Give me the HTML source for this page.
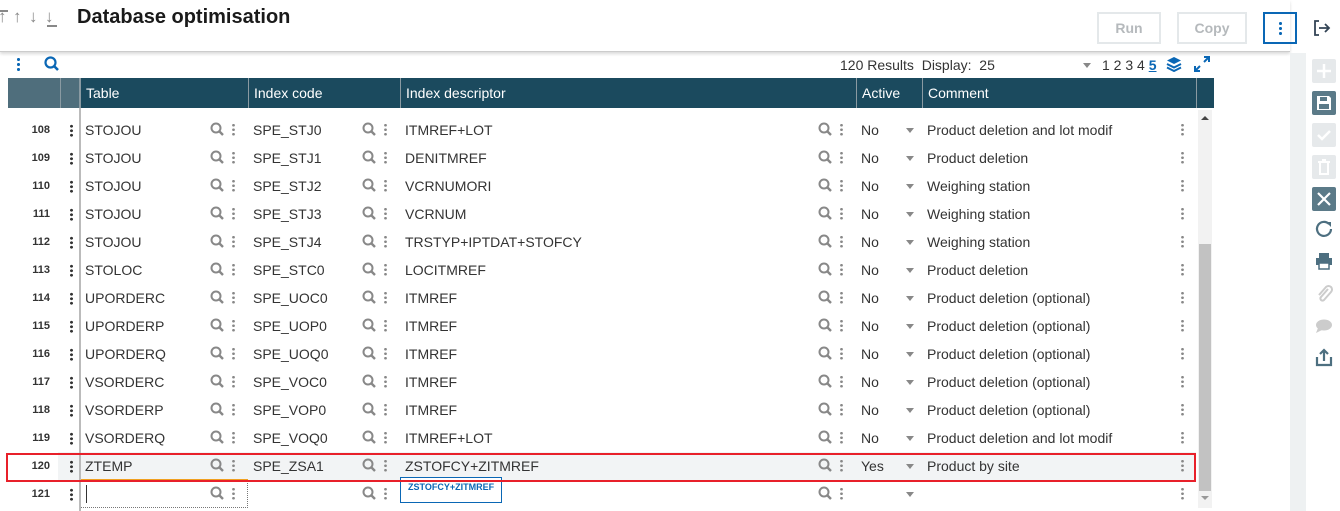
<!DOCTYPE html>
<html><head><meta charset="utf-8"><style>
*{box-sizing:border-box;margin:0;padding:0}
body{width:1340px;height:511px;overflow:hidden;background:#fff;font-family:"Liberation Sans",sans-serif;color:#333;position:relative}
svg{display:block}
.a{position:absolute}
.hdr{left:0;top:0;width:1290px;height:52px;border-bottom:1px solid #ccc;box-shadow:0 2px 3px rgba(0,0,0,.15)}
.btn{border:2px solid #e4e8ea;color:#b5b9bc;font-size:14px;font-weight:bold;text-align:center;line-height:28px;height:32px}
.th{top:78px;height:30px;background:#1b4a5e;color:#fff;font-size:14px;line-height:30px;padding-left:5px;border-left:1px solid #8a9aa2}
.row{left:8px;width:1188px;height:28px;font-size:14px;line-height:28px}
.c{position:absolute;top:0}
.num{left:0;width:50px;text-align:right;font-size:11px;font-weight:bold;color:#333}
.dots{width:3px;height:13px;top:8px;background:radial-gradient(circle,#333 1.3px,transparent 1.6px) 0 0/3px 4.5px repeat-y}
.gd{width:3px;height:13px;top:7px;background:radial-gradient(circle,#888 1.2px,transparent 1.5px) 0 0/3px 4.5px repeat-y}
.mag{width:14px;height:14px;top:6px}
.dd{width:0;height:0;border-left:4px solid transparent;border-right:4px solid transparent;border-top:5px solid #888;top:12px}
.sb{left:1312px;width:24px;height:24px;border-radius:2px}
.ar{font-size:17px;color:#888;top:7px}
</style></head><body>
<div class="a hdr"></div>
<div class="a ar" style="left:-2px">↑</div>
<div class="a" style="left:0;top:10px;width:8px;height:1.5px;background:#888"></div>
<div class="a ar" style="left:13px">↑</div>
<div class="a ar" style="left:29px">↓</div>
<div class="a ar" style="left:45px">↓</div>
<div class="a" style="left:47px;top:25px;width:10px;height:1.5px;background:#888"></div>
<div class="a" style="left:77px;top:6px;font-size:20px;font-weight:bold;color:#1a1a1a">Database optimisation</div>
<div class="a btn" style="left:1097px;top:12px;width:64px">Run</div>
<div class="a btn" style="left:1177px;top:12px;width:70px">Copy</div>
<div class="a" style="left:1263px;top:12px;width:34px;height:32px;border:2px solid #0a67b5"><div class="a" style="left:14px;top:7px;width:3px;height:14px;background:radial-gradient(circle,#0a67b5 1.4px,transparent 1.7px) 0 0/3px 5px repeat-y"></div></div>
<svg class="a" style="left:1313px;top:20px" width="18" height="16"><path d="M6 1H2v14h4M6 8h10M12 4l4 4-4 4" stroke="#345" stroke-width="1.8" fill="none"/></svg>
<div class="a" style="left:1290px;top:53px;width:16px;height:458px;background:#eef1f2"></div>
<div class="a" style="left:17px;top:57px;width:3px;height:14px;background:radial-gradient(circle,#0a67b5 1.4px,transparent 1.7px) 0 0/3px 5px repeat-y"></div>
<svg class="a" style="left:44px;top:56px" width="16" height="16"><circle cx="6.5" cy="6.5" r="5" stroke="#0a67b5" stroke-width="2.2" fill="none"/><path d="M10 10l4 4" stroke="#0a67b5" stroke-width="2.6"/></svg>
<div class="a" style="left:840px;top:57px;font-size:14px">120 Results&nbsp; Display:&nbsp; 25</div>
<div class="a dd" style="left:1083px;top:63px"></div>
<div class="a" style="left:1102px;top:57px;font-size:14px">1 2 3 4 <b style="color:#0a67b5;text-decoration:underline">5</b></div>
<svg class="a" style="left:1166px;top:56px" width="16" height="16"><path d="M8 1L15 4.5 8 8 1 4.5Z" fill="#0a67b5"/><path d="M1 8l7 3.5L15 8M1 11.5l7 3.5 7-3.5" stroke="#0a67b5" stroke-width="2" fill="none"/></svg>
<svg class="a" style="left:1194px;top:56px" width="16" height="16"><path d="M10 1h5v5M15 1l-5 5M6 15H1v-5M1 15l5-5" stroke="#0a67b5" stroke-width="2" fill="none"/></svg>
<div class="a" style="left:8px;top:78px;width:52px;height:30px;background:#4f6e7c"></div>
<div class="a" style="left:60px;top:78px;width:19px;height:30px;background:#4f6e7c;border-left:1px solid #8a9aa2"></div>
<div class="a th" style="left:79px;width:169px;border-left:2px solid #8a9aa2">Table</div>
<div class="a th" style="left:248px;width:152px">Index code</div>
<div class="a th" style="left:400px;width:456px">Index descriptor</div>
<div class="a th" style="left:856px;width:66px">Active</div>
<div class="a th" style="left:922px;width:274px">Comment</div>
<div class="a" style="left:1196px;top:78px;width:18px;height:30px;background:#1b4a5e;border-left:1px solid #8a9aa2"></div>
<div class="a" style="left:1198px;top:110px;width:14px;height:398px;background:#f2f2f2"></div>
<div class="a" style="left:1199px;top:244px;width:12px;height:247px;background:#c2c2c2"></div>
<div class="a" style="left:1201px;top:116px;border-left:4px solid transparent;border-right:4px solid transparent;border-bottom:4px solid #444"></div>
<div class="a" style="left:1201px;top:496px;border-left:4px solid transparent;border-right:4px solid transparent;border-top:4px solid #999"></div>
<div id="rows"></div>
<div class="a" style="left:79px;top:108px;width:2px;height:403px;background:#bbb"></div>
<div class="a" style="left:400px;top:477px;width:102px;height:26px;border:1px solid #0a67b5;background:#fff;color:#0a67b5;font-size:9px;font-weight:bold;line-height:18px;padding-left:7px">ZSTOFCY+ZITMREF</div>
<div class="a" style="left:6px;top:453px;width:1190px;height:29px;border:2px solid #e8202a"></div>
<div class="a sb" style="top:59px;background:#e6e9eb"><svg width="24" height="24"><path d="M12 5v14M5 12h14" stroke="#fff" stroke-width="2.5"/></svg></div>
<div class="a sb" style="top:91px;background:#5b7a88"><svg width="24" height="24"><path d="M5 5h12l2 2v12H5z" fill="#fff"/><rect x="8" y="6" width="7" height="4" fill="#5b7a88"/><rect x="7" y="13" width="10" height="5" fill="#5b7a88"/></svg></div>
<div class="a sb" style="top:123px;background:#e6e9eb"><svg width="24" height="24"><path d="M6 12l4 4 8-8" stroke="#fff" stroke-width="2.5" fill="none"/></svg></div>
<div class="a sb" style="top:155px;background:#e6e9eb"><svg width="24" height="24"><path d="M6 7h12M8 8v11h8V8M10 5h4" stroke="#fff" stroke-width="2" fill="none"/></svg></div>
<div class="a sb" style="top:187px;background:#5b7a88"><svg width="24" height="24"><path d="M6 6l12 12M18 6L6 18" stroke="#fff" stroke-width="2.2"/></svg></div>
<svg class="a" style="left:1314px;top:219px" width="20" height="20"><path d="M15 5a7 7 0 1 0 2 5" stroke="#4d6f80" stroke-width="2.2" fill="none"/><path d="M12 3h5v5z" fill="#4d6f80"/></svg>
<svg class="a" style="left:1314px;top:251px" width="20" height="20"><rect x="5" y="2" width="10" height="5" fill="#4d6f80"/><rect x="2" y="7" width="16" height="7" fill="#4d6f80"/><rect x="5" y="12" width="10" height="6" fill="#fff" stroke="#4d6f80" stroke-width="1.5"/></svg>
<svg class="a" style="left:1314px;top:284px" width="20" height="20"><path d="M14 5l-7 8a2 2 0 0 0 3 3l7-8a3.5 3.5 0 0 0-5-5l-7 8" stroke="#ccc" stroke-width="2" fill="none"/></svg>
<svg class="a" style="left:1314px;top:316px" width="20" height="20"><ellipse cx="10" cy="9" rx="8" ry="5.5" fill="#ccc"/><path d="M4 12l-2 5 6-3z" fill="#ccc"/></svg>
<svg class="a" style="left:1314px;top:347px" width="20" height="20"><path d="M3 10v8h14v-8" stroke="#4d6f80" stroke-width="2.2" fill="none"/><path d="M10 14V3M6 7l4-4 4 4" stroke="#4d6f80" stroke-width="2.2" fill="none"/></svg>
<script>
var d=[["108","STOJOU","SPE_STJ0","ITMREF+LOT","No","Product deletion and lot modif"],
["109","STOJOU","SPE_STJ1","DENITMREF","No","Product deletion"],
["110","STOJOU","SPE_STJ2","VCRNUMORI","No","Weighing station"],
["111","STOJOU","SPE_STJ3","VCRNUM","No","Weighing station"],
["112","STOJOU","SPE_STJ4","TRSTYP+IPTDAT+STOFCY","No","Weighing station"],
["113","STOLOC","SPE_STC0","LOCITMREF","No","Product deletion"],
["114","UPORDERC","SPE_UOC0","ITMREF","No","Product deletion (optional)"],
["115","UPORDERP","SPE_UOP0","ITMREF","No","Product deletion (optional)"],
["116","UPORDERQ","SPE_UOQ0","ITMREF","No","Product deletion (optional)"],
["117","VSORDERC","SPE_VOC0","ITMREF","No","Product deletion (optional)"],
["118","VSORDERP","SPE_VOP0","ITMREF","No","Product deletion (optional)"],
["119","VSORDERQ","SPE_VOQ0","ITMREF+LOT","No","Product deletion and lot modif"],
["120","ZTEMP","SPE_ZSA1","ZSTOFCY+ZITMREF","Yes","Product by site"],
["121","","","","",""]];
var mag='<svg width="14" height="14"><circle cx="6" cy="6" r="4.5" stroke="#888" stroke-width="2" fill="none"/><path d="M9 9l4 4" stroke="#888" stroke-width="2.4"/></svg>';
var h='';
d.forEach(function(r,i){var t=116+i*28;var bg=i==12?'#f2f4f5':'#fff';
h+='<div class="a row" style="top:'+t+'px;background:'+bg+'">'+
'<div class="c num" style="height:28px;padding-right:8px;background:#fff">'+r[0]+'</div>'+
'<div class="c dots" style="left:62px"></div>'+
'<div class="c" style="left:77px">'+r[1]+'</div>'+
'<div class="c mag" style="left:202px">'+mag+'</div><div class="c gd" style="left:224px"></div>'+
'<div class="c" style="left:245px">'+r[2]+'</div>'+
'<div class="c mag" style="left:354px">'+mag+'</div><div class="c gd" style="left:376px"></div>'+
'<div class="c" style="left:397px">'+r[3]+'</div>'+
'<div class="c mag" style="left:810px">'+mag+'</div><div class="c gd" style="left:832px"></div>'+
'<div class="c" style="left:853px">'+r[4]+'</div>'+
'<div class="c dd" style="left:898px"></div>'+
'<div class="c" style="left:919px">'+r[5]+'</div>'+
'<div class="c gd" style="left:1173px"></div></div>';});
h+='<div class="a" style="left:80px;top:480px;width:168px;height:28px;border:1px dotted #777"></div><div class="a" style="left:86px;top:485px;width:1px;height:18px;background:#333"></div><div class="a" style="left:80px;top:479px;width:168px;height:1px;background:#f0a020"></div>';
document.getElementById('rows').outerHTML=h;
</script>
</body></html>
